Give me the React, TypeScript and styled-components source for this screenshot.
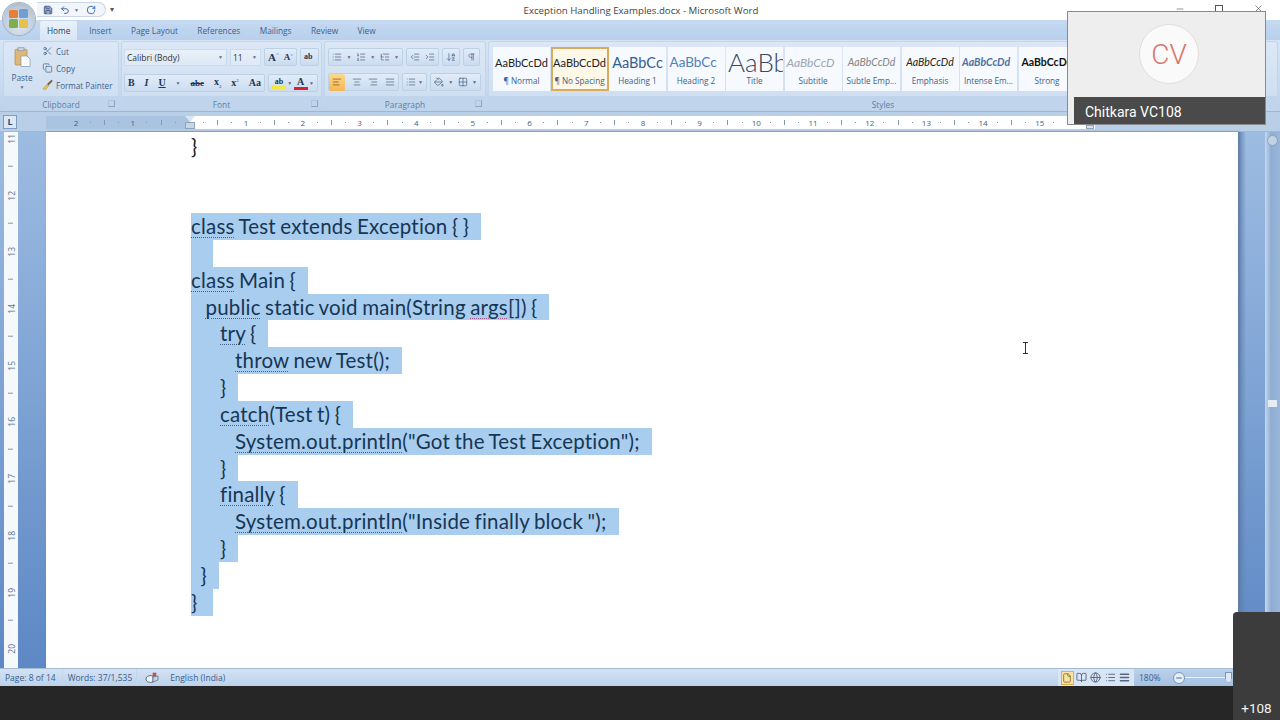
import React from "react";
import styled, { createGlobalStyle } from "styled-components";
import {
  AlignCenter, AlignJustify, AlignLeft, AlignRight, ArrowDownAZ, BookOpen, Copy, File, Globe, Grid2x2, IndentDecrease,
  IndentIncrease, List, ListOrdered, ListTree, Minus, PaintBucket, Pilcrow, Save, Scissors, Undo2, RotateCw, X,
} from "lucide-react";

const GlobalStyle = createGlobalStyle`
  html, body { margin: 0; padding: 0; background: #fff; overflow: hidden; }
  * { box-sizing: border-box; }
`;

const tabs = ["Home", "Insert", "Page Layout", "References", "Mailings", "Review", "View"];

const styleItems = [
  { name: "¶ Normal", preview: "AaBbCcDd", size: 11, color: "#222", font: "normal" },
  { name: "¶ No Spacing", preview: "AaBbCcDd", size: 11, color: "#222", font: "normal", active: true },
  { name: "Heading 1", preview: "AaBbCc", size: 14.5, color: "#365f91", font: "normal" },
  { name: "Heading 2", preview: "AaBbCc", size: 13.5, color: "#4f81bd", font: "normal", clip: true },
  { name: "Title", preview: "AaBb", size: 26, color: "#3a4a5c", font: "normal", clip: true, light: true },
  { name: "Subtitle", preview: "AaBbCcD", size: 12, color: "#9aa6b3", font: "italic", clip: true },
  { name: "Subtle Emp...", preview: "AaBbCcDd", size: 10.5, color: "#858585", font: "italic" },
  { name: "Emphasis", preview: "AaBbCcDd", size: 10.5, color: "#222", font: "italic" },
  { name: "Intense Em...", preview: "AaBbCcDd", size: 10.5, color: "#4f6fa5", font: "italic", bold: true, clip: true },
  { name: "Strong", preview: "AaBbCcDd", size: 10.5, color: "#111", font: "normal", bold: true },
];

const hRuler = ["2", "1", "", "1", "2", "3", "4", "5", "6", "7", "8", "9", "10", "11", "12", "13", "14", "15"];
const vRuler = ["11", "12", "13", "14", "15", "16", "17", "18", "19", "20"];

const Page = styled.div`
  position: relative;
  width: 1280px;
  height: 720px;
  display: flex;
  flex-direction: column;
  overflow: hidden;
  font-family: "Open Sans", "Liberation Sans", sans-serif;
  background: #262626;
`;

const TitleBar = styled.div`
  height: 20px;
  flex: none;
  display: flex;
  align-items: center;
  justify-content: center;
  background: #fff;
  color: #444;
  font-size: 9.7px;
  padding-left: 2px;
`;

const WindowButtons = styled.div`
  position: absolute;
  top: 3px;
  right: 16px;
  display: flex;
  gap: 30px;
  align-items: center;
  color: #555;
`;

const RestoreBox = styled.span`
  width: 8px;
  height: 8px;
  border: 1px solid #555;
`;

const Quick = styled.div`
  position: absolute;
  left: 37px;
  top: 2px;
  width: 69px;
  height: 15px;
  display: flex;
  align-items: center;
  gap: 7px;
  padding-left: 6px;
  background: #f2f6fb;
  border: 1px solid #c9d6e6;
  border-left: none;
  border-radius: 0 9px 9px 0;
`;

const QuickCaret = styled.span`
  margin-left: -3px;
  color: #5a6f8a;
  font-size: 5px;
`;

const QuickMore = styled.span`
  position: absolute;
  left: 110px;
  top: 4px;
  color: #555;
  font-size: 8px;
  line-height: 10px;
`;

const OfficeButton = styled.div`
  position: absolute;
  left: 3px;
  top: 3px;
  width: 32px;
  height: 32px;
  border-radius: 50%;
  display: flex;
  align-items: center;
  justify-content: center;
  background: radial-gradient(circle at 50% 70%, #dfe9f3, #b9c6d4 70%, #8ea0b2);
  box-shadow: 0 0 0 1px #9fb3c8;
`;

const TabRow = styled.div`
  height: 20px;
  flex: none;
  display: flex;
  align-items: flex-end;
  padding-left: 40px;
  background: linear-gradient(#c5daf2, #b7d0ec);
`;

const Tab = styled.div<{ $active?: boolean }>`
  height: ${(p) => (p.$active ? "19px" : "20px")};
  display: flex;
  align-items: center;
  padding: 0 ${(p) => (p.$active ? "7px" : "9.7px")};
  margin-right: ${(p) => (p.$active ? "2px" : "0")};
  font-size: 8.3px;
  color: ${(p) => (p.$active ? "#24426b" : "#3f5f8a")};
  background: ${(p) => (p.$active ? "linear-gradient(#eaf2fb, #d7e5f5)" : "transparent")};
  border-radius: 2px 2px 0 0;
`;

const Ribbon = styled.div`
  height: 72px;
  flex: none;
  display: flex;
  gap: 2px;
  padding: 1px 0 1px 3px;
  background: linear-gradient(#d6e5f6, #bdd3eb);
  border-bottom: 1px solid #9db8d6;
`;

const Group = styled.div<{ $width: number }>`
  width: ${(p) => p.$width}px;
  flex: none;
  display: flex;
  flex-direction: column;
  background: linear-gradient(#dbe7f6, #cfdff1 80%, #c0d5ec 80%);
  border: 1px solid #c2d5ea;
  border-radius: 3px;
`;

const GroupBody = styled.div`
  flex: 1;
  display: flex;
  min-height: 0;
`;

const GroupLabel = styled.div`
  position: relative;
  height: 10px;
  flex: none;
  display: flex;
  align-items: center;
  justify-content: center;
  font-size: 8.3px;
  color: #5d7ea8;
`;

const Launcher = styled.span`
  position: absolute;
  right: 3px;
  top: 1px;
  width: 7px;
  height: 7px;
  border: 1px solid #8ba5c4;
  border-top-color: #b0c4da;
  border-left-color: #b0c4da;
`;

const PasteButton = styled.div`
  width: 36px;
  display: flex;
  flex-direction: column;
  align-items: center;
  padding-top: 5px;
  font-size: 8.3px;
  line-height: 10px;
  color: #3f5f8a;
  gap: 5px;
`;

const PasteCaret = styled.span`
  margin-top: -4px;
  color: #5a6f8a;
  font-size: 5px;
  line-height: 6px;
`;

const ClipList = styled.div`
  display: flex;
  flex-direction: column;
  gap: 3px;
  padding: 2px 0 0 2px;
`;

const ClipItem = styled.div`
  display: flex;
  align-items: center;
  gap: 3px;
  height: 14px;
  font-size: 8.1px;
  color: #3f5f8a;
  white-space: nowrap;
  svg { width: 11px; flex: none; }
`;

const FontBody = styled.div`
  flex: 1;
  display: flex;
  flex-direction: column;
  gap: 8px;
  padding: 6px 2px 0 2px;
`;

const ToolRow = styled.div`
  display: flex;
  align-items: center;
  gap: 3px;
  height: 18px;
`;

const Combo = styled.div<{ $width: number }>`
  width: ${(p) => p.$width}px;
  height: 17px;
  display: flex;
  align-items: center;
  justify-content: space-between;
  padding: 0 3px 0 2px;
  font-size: 8.5px;
  color: #333;
  background: linear-gradient(#e9f0f9, #dce8f5);
  border: 1px solid #cbdbed;
`;

const Caret = styled.span`
  color: #5a6f8a;
  font-size: 5px;
`;

const ToolGroup = styled.div<{ $width: number }>`
  width: ${(p) => p.$width}px;
  height: 18px;
  flex: none;
  display: flex;
  align-items: center;
  justify-content: space-between;
  padding: 0 3px;
  background: linear-gradient(#e2ecf8, #cbdcf0);
  border: 1px solid #bcd0e6;
  border-radius: 2px;
`;

const ActiveTool = styled.span`
  width: 16px;
  height: 17px;
  margin-left: -3px;
  display: flex;
  align-items: center;
  justify-content: center;
  background: linear-gradient(#fbd98d, #f5b654);
  border-radius: 2px;
`;

const Glyph = styled.span<{ $bold?: boolean; $italic?: boolean; $under?: boolean; $strike?: boolean; $size?: number }>`
  font-family: "Liberation Serif", serif;
  font-size: ${(p) => p.$size ?? 10}px;
  line-height: 1;
  color: #24364f;
  font-weight: ${(p) => (p.$bold ? 700 : 400)};
  font-style: ${(p) => (p.$italic ? "italic" : "normal")};
  text-decoration: ${(p) => (p.$under ? "underline" : p.$strike ? "line-through" : "none")};
  white-space: nowrap;
  sup, sub { font-size: 5px; color: #5a7fb0; }
`;

const ColorGlyph = styled.span<{ $color: string }>`
  display: flex;
  flex-direction: column;
  align-items: center;
  width: 14px;
  font-family: "Liberation Serif", serif;
  font-size: 10px;
  line-height: 10px;
  font-weight: 700;
  color: #24364f;
  &::after {
    content: "";
    width: 14px;
    height: 3px;
    background: ${(p) => p.$color};
  }
`;

const ParaBody = styled.div`
  flex: 1;
  display: flex;
  flex-direction: column;
  gap: 7px;
  padding: 6px 2px 0 3px;
`;

const Gallery = styled.div`
  flex: 1;
  display: flex;
  gap: 1.5px;
  padding: 5px 0 0 4px;
  overflow: hidden;
`;

const StyleCard = styled.div<{ $active?: boolean }>`
  width: ${(p) => (p.$active ? "58px" : "57px")};
  height: 44px;
  flex: none;
  display: flex;
  flex-direction: column;
  align-items: center;
  background: ${(p) => (p.$active ? "#fdf8e8" : "#f6f9fd")};
  box-shadow: ${(p) => (p.$active ? "inset 0 0 0 2px #d9ab5c" : "none")};
  margin: ${(p) => (p.$active ? "0 -1px" : "0")};
  overflow: hidden;
`;

const Preview = styled.div<{ $size: number; $color: string; $italic: boolean; $bold?: boolean; $light?: boolean; $clip?: boolean }>`
  height: 30px;
  flex: none;
  display: flex;
  align-items: center;
  align-self: ${(p) => (p.$clip ? "flex-start" : "center")};
  padding-left: ${(p) => (p.$clip ? "2px" : "0")};
  font-family: Lato, "Noto Sans", sans-serif;
  font-size: ${(p) => p.$size}px;
  color: ${(p) => p.$color};
  font-style: ${(p) => (p.$italic ? "italic" : "normal")};
  font-weight: ${(p) => (p.$bold ? 700 : p.$light ? 300 : 400)};
  white-space: nowrap;
`;

const StyleName = styled.div`
  margin-top: -2px;
  font-size: 8.2px;
  line-height: 12px;
  color: #3f5f8a;
  white-space: nowrap;
`;

const RulerRow = styled.div`
  height: 20px;
  flex: none;
  display: flex;
  align-items: center;
  padding-top: 2px;
  background: #b9cfe8;
  border-bottom: 1px solid #9fb8d4;
`;

const RulerCorner = styled.div`
  width: 46px;
  height: 18px;
  flex: none;
  padding: 1px 0 0 3px;
`;

const CornerBox = styled.div`
  width: 14px;
  height: 14px;
  display: flex;
  align-items: center;
  justify-content: center;
  background: #dce8f5;
  border: 1px solid #7f9cc0;
  color: #2a4a72;
  font-size: 9px;
  font-weight: 700;
  line-height: 10px;
`;

const Ruler = styled.div`
  position: relative;
  width: 1049px;
  height: 13px;
  display: flex;
  padding-left: 23px;
  background: linear-gradient(90deg, #a9c3e0 144px, #fff 144px);
  overflow: hidden;
`;

const RulerCell = styled.div`
  width: 56.7px;
  flex: none;
  display: grid;
  grid-template-columns: repeat(4, 1fr);
  align-items: center;
  justify-items: center;
  font-size: 8px;
  color: #46617f;
`;

const Tick = styled.span<{ $long?: boolean }>`
  width: 1px;
  height: ${(p) => (p.$long ? "5px" : "1px")};
  background: #8397ae;
`;

const Indent = styled.div`
  position: absolute;
  left: 139px;
  top: 0;
  width: 0;
  height: 0;
  border-left: 5px solid transparent;
  border-right: 5px solid transparent;
  border-top: 6px solid #dbe5f0;
`;

const IndentFoot = styled.div`
  position: absolute;
  left: 139px;
  top: 6px;
  width: 10px;
  height: 7px;
  background: #c7d5e4;
  border: 1px solid #8fa5be;
`;

const RightIndent = styled.div`
  position: absolute;
  right: 1px;
  bottom: 0;
  width: 8px;
  height: 4px;
  background: #dbe5f0;
  border: 1px solid #8fa5be;
`;

const Main = styled.div`
  height: 536px;
  flex: none;
  display: flex;
  background: linear-gradient(#9dbce2, #5d88c5);
`;

const VRulerTrack = styled.div`
  width: 14px;
  margin-left: 4px;
  flex: none;
  display: flex;
  flex-direction: column;
  align-items: center;
  background: #f6f9fc;
  font-size: 8.5px;
  color: #5b7390;
  overflow: hidden;
`;

const VRulerCell = styled.div`
  position: relative;
  width: 14px;
  height: 56.7px;
  flex: none;
  display: flex;
  align-items: center;
  justify-content: center;
  writing-mode: vertical-rl;
  transform: translateY(-22px) rotate(180deg);
  &::after {
    content: "";
    position: absolute;
    top: 0;
    left: 5px;
    width: 5px;
    height: 1px;
    background: #8397ae;
  }
`;

const Gutter = styled.div`
  width: 28px;
  flex: none;
`;

const DocPage = styled.div`
  width: 1192px;
  flex: none;
  padding: 0 0 0 145px;
  background: #fff;
  box-shadow: 1px 0 2px #5f7088;
  font-family: Lato, sans-serif;
  font-size: 20.5px;
  letter-spacing: 0.2px;
  word-spacing: -1px;
  font-variant-ligatures: none;
  color: #173653;
`;

const Brace = styled.div`
  height: 28px;
  line-height: 28px;
  color: #222;
  margin-bottom: 53px;
`;

const SelLine = styled.div<{ $indent?: number }>`
  width: fit-content;
  height: 26.85px;
  line-height: 27px;
  padding-left: ${(p) => p.$indent ?? 0}px;
  padding-right: 12px;
  min-width: 22px;
  white-space: pre;
  background: #a8cdef;
`;

const Spell = styled.span<{ $grammar?: boolean }>`
  text-decoration: underline dotted ${(p) => (p.$grammar ? "#9a5a8c" : "#43618c")} 1px;
  text-underline-offset: 3px;
`;

const SideBlue = styled.div`
  width: 27px;
  flex: none;
  background: linear-gradient(90deg, #5f7ea8, transparent 30%);
`;

const ScrollBar = styled.div`
  position: relative;
  flex: 1;
  background: linear-gradient(90deg, #c6d8ee, #8fadd2 40%, #9ab7da);
`;

const ScrollUp = styled.div`
  position: absolute;
  top: 3px;
  left: 2px;
  width: 11px;
  height: 11px;
  border-radius: 50%;
  background: #c2d3e6;
  border: 1px solid #8aa0b8;
`;

const ScrollMark = styled.div`
  position: absolute;
  top: 268px;
  left: 3px;
  width: 9px;
  height: 7px;
  background: #e4ecf4;
`;

const StatusBar = styled.div`
  height: 18px;
  flex: none;
  display: flex;
  align-items: center;
  justify-content: space-between;
  background: linear-gradient(#d3e2f4, #bbd2ec);
  border-top: 1px solid #a5bbd4;
  font-size: 8.5px;
  color: #3c5c88;
`;

const StatusLeft = styled.div`
  display: flex;
  align-items: center;
  height: 100%;
`;

const StatusCell = styled.div<{ $pad?: number }>`
  display: flex;
  align-items: center;
  height: 100%;
  padding: 0 ${(p) => p.$pad ?? 6}px 0 5px;
  border-right: 1px solid #c4d6ea;
`;

const StatusPlain = styled.div<{ $left: number }>`
  display: flex;
  padding-left: ${(p) => p.$left}px;
  white-space: nowrap;
`;

const StatusRight = styled.div`
  width: 222px;
  height: 100%;
  display: flex;
  align-items: center;
  padding-right: 48px;
  background: linear-gradient(#bcd1ea, #a5c0e0);
`;

const ViewButtons = styled.div`
  width: 76px;
  height: 100%;
  flex: none;
  display: flex;
  align-items: center;
  justify-content: space-around;
  padding: 0 2px;
  background: #d8e5f4;
  color: #55677e;
`;

const ViewIcon = styled.span<{ $active?: boolean }>`
  width: 13px;
  height: 14px;
  display: flex;
  align-items: center;
  justify-content: center;
  background: ${(p) => (p.$active ? "#f9e2a6" : "transparent")};
  border: 1px solid ${(p) => (p.$active ? "#e0ae4a" : "transparent")};
`;

const ZoomLabel = styled.div`
  padding: 0 12px 0 5px;
  color: #35609b;
`;

const ZoomMinus = styled.div`
  width: 12px;
  height: 12px;
  flex: none;
  display: flex;
  align-items: center;
  justify-content: center;
  border-radius: 50%;
  background: #e6eef8;
  border: 1px solid #7a95b8;
  color: #35506f;
`;

const ZoomTrack = styled.div`
  flex: 1;
  height: 1px;
  background: #eaf1f9;
`;

const ZoomThumb = styled.div`
  width: 7px;
  height: 11px;
  flex: none;
  background: #dfe8f3;
  border: 1px solid #7a95b8;
  clip-path: polygon(0 0, 100% 0, 100% 60%, 50% 100%, 0 60%);
`;

const BottomBar = styled.div`
  flex: 1;
  background: #262626;
`;

const VideoTile = styled.div`
  position: absolute;
  left: 1067px;
  top: 11px;
  width: 199px;
  height: 114px;
  display: flex;
  flex-direction: column;
  align-items: center;
  justify-content: flex-end;
  padding: 0 0 0 6px;
  background: #eeeeee;
  border: 1px solid #8a8a8a;
`;

const Avatar = styled.div`
  position: absolute;
  left: 71px;
  top: 12px;
  width: 60px;
  height: 60px;
  display: flex;
  align-items: center;
  justify-content: center;
  border-radius: 50%;
  background: #fafafa;
  border: 1px solid #e6dcdc;
  color: #d8756d;
  font-family: Roboto, sans-serif;
  font-size: 28px;
  font-weight: 300;
`;

const NameTag = styled.div`
  width: 100%;
  height: 27px;
  display: flex;
  align-items: center;
  padding: 2px 0 0 11px;
  background: #4a4a4a;
  color: #fff;
  font-family: Roboto, sans-serif;
  font-size: 14px;
`;

const MoreBox = styled.div`
  position: absolute;
  right: 0;
  bottom: 0;
  width: 47px;
  height: 108px;
  display: flex;
  align-items: flex-end;
  justify-content: center;
  padding-bottom: 4px;
  background: #3c3c3c;
  border-radius: 4px 0 0 0;
  color: #f2f2f2;
  font-family: Roboto, sans-serif;
  font-size: 13.5px;
`;

const IBeam = styled.div`
  position: absolute;
  left: 1025px;
  top: 342px;
  width: 1px;
  height: 12px;
  background: #333;
  &::before, &::after {
    content: "";
    position: absolute;
    left: -2px;
    width: 5px;
    height: 1px;
    background: #333;
  }
  &::before { top: 0; }
  &::after { bottom: 0; }
`;

const icon = { size: 10, strokeWidth: 1.6, color: "#3e5a7e" };

const OfficeLogo = () => (
  <svg width="24" height="24" viewBox="0 0 24 24">
    <rect x="2" y="3" width="9" height="8" rx="1.5" fill="#e2803a" />
    <rect x="12" y="2" width="9" height="9" rx="1.5" fill="#6f9fd0" />
    <rect x="2" y="12" width="9" height="9" rx="1.5" fill="#7fae4e" />
    <rect x="12" y="12" width="9" height="9" rx="1.5" fill="#e6c24c" />
  </svg>
);

const PasteIcon = () => (
  <svg width="19" height="21" viewBox="0 0 22 28">
    <rect x="1" y="3" width="16" height="21" rx="1.5" fill="#dcb777" stroke="#b08d52" />
    <rect x="5" y="1" width="8" height="4" fill="#cfd6de" stroke="#8b96a3" />
    <path d="M9 12h8l4 4v10H9z" fill="#fff" stroke="#8b9cb0" />
  </svg>
);

const BrushIcon = () => (
  <svg width="12" height="12" viewBox="0 0 12 12">
    <path d="M11 1 6 6" stroke="#7a5a30" strokeWidth="2" />
    <path d="M6 5 1 10l3 1 3-4z" fill="#f0c64e" stroke="#a9862f" strokeWidth=".6" />
  </svg>
);

const SpellIcon = () => (
  <svg width="16" height="14" viewBox="0 0 16 14">
    <path d="M2 8c0-3 4-4 7-3v6c-3 1-7 0-7-3z" fill="#eef3f9" stroke="#55677e" />
    <path d="M9 2l3 3m0-3L9 5" stroke="#d8492f" strokeWidth="2" />
    <path d="M9 6l5-1v4l-5 2z" fill="#c9d3df" stroke="#55677e" strokeWidth=".7" />
  </svg>
);

const HighlightIcon = () => (
  <ColorGlyph $color="#f5e642">
    <Glyph $size={8} $bold>ab</Glyph>
  </ColorGlyph>
);

export default function App() {
  return (
    <Page>
      <GlobalStyle />
      <TitleBar>Exception Handling Examples.docx - Microsoft Word</TitleBar>

      <TabRow>
        {tabs.map((t, i) => (
          <Tab key={t} $active={i === 0}>{t}</Tab>
        ))}
      </TabRow>

      <Ribbon>
        <Group $width={116}>
          <GroupBody>
            <PasteButton>
              <PasteIcon />
              Paste
              <PasteCaret>▼</PasteCaret>
            </PasteButton>
            <ClipList>
              <ClipItem><Scissors {...icon} />Cut</ClipItem>
              <ClipItem><Copy {...icon} />Copy</ClipItem>
              <ClipItem><BrushIcon />Format Painter</ClipItem>
            </ClipList>
          </GroupBody>
          <GroupLabel>Clipboard<Launcher /></GroupLabel>
        </Group>

        <Group $width={201}>
          <FontBody>
            <ToolRow>
              <Combo $width={103}>Calibri (Body)<Caret>▼</Caret></Combo>
              <Combo $width={31}>11<Caret>▼</Caret></Combo>
              <ToolGroup $width={33}>
                <Glyph $bold $size={11}>A<sup>^</sup></Glyph>
                <Glyph $bold $size={9}>A<sup>˅</sup></Glyph>
              </ToolGroup>
              <ToolGroup $width={19}><Glyph $size={8} $bold>ab</Glyph></ToolGroup>
            </ToolRow>
            <ToolRow>
              <ToolGroup $width={141}>
                <Glyph $bold>B</Glyph>
                <Glyph $italic $bold>I</Glyph>
                <Glyph $bold $under>U</Glyph>
                <Caret>▼</Caret>
                <Glyph $strike $bold $size={9}>abe</Glyph>
                <Glyph $bold>x<sub>2</sub></Glyph>
                <Glyph $bold>x<sup>2</sup></Glyph>
                <Glyph $bold>Aa</Glyph>
              </ToolGroup>
              <ToolGroup $width={50}>
                <HighlightIcon />
                <Caret>▼</Caret>
                <ColorGlyph $color="#d8232a">A</ColorGlyph>
                <Caret>▼</Caret>
              </ToolGroup>
            </ToolRow>
          </FontBody>
          <GroupLabel>Font<Launcher /></GroupLabel>
        </Group>

        <Group $width={162}>
          <ParaBody>
            <ToolRow>
              <ToolGroup $width={75}>
                <List {...icon} /><Caret>▼</Caret>
                <ListOrdered {...icon} /><Caret>▼</Caret>
                <ListTree {...icon} /><Caret>▼</Caret>
              </ToolGroup>
              <ToolGroup $width={33}>
                <IndentDecrease {...icon} />
                <IndentIncrease {...icon} />
              </ToolGroup>
              <ToolGroup $width={18}><ArrowDownAZ {...icon} /></ToolGroup>
              <ToolGroup $width={17}><Pilcrow {...icon} /></ToolGroup>
            </ToolRow>
            <ToolRow>
              <ToolGroup $width={71}>
                <ActiveTool><AlignLeft {...icon} color="#7a4a10" /></ActiveTool>
                <AlignCenter {...icon} />
                <AlignRight {...icon} />
                <AlignJustify {...icon} />
              </ToolGroup>
              <ToolGroup $width={25}><List {...icon} /><Caret>▼</Caret></ToolGroup>
              <ToolGroup $width={51}>
                <PaintBucket {...icon} /><Caret>▼</Caret>
                <Grid2x2 {...icon} /><Caret>▼</Caret>
              </ToolGroup>
            </ToolRow>
          </ParaBody>
          <GroupLabel>Paragraph<Launcher /></GroupLabel>
        </Group>

        <Group $width={790}>
          <Gallery>
            {styleItems.map((s) => (
              <StyleCard key={s.name} $active={s.active}>
                <Preview
                  $size={s.size}
                  $color={s.color}
                  $italic={s.font === "italic"}
                  $bold={s.bold}
                  $light={s.light}
                  $clip={s.clip}
                >
                  {s.preview}
                </Preview>
                <StyleName>{s.name}</StyleName>
              </StyleCard>
            ))}
          </Gallery>
          <GroupLabel>Styles</GroupLabel>
        </Group>
      </Ribbon>

      <RulerRow>
        <RulerCorner><CornerBox>L</CornerBox></RulerCorner>
        <Ruler>
          {hRuler.map((n, i) => (
            <RulerCell key={i}>
              <span>{n}</span>
              <Tick />
              <Tick $long />
              <Tick />
            </RulerCell>
          ))}
          <Indent />
          <IndentFoot />
          <RightIndent />
        </Ruler>
      </RulerRow>

      <Main>
        <VRulerTrack>
          {vRuler.map((n) => (
            <VRulerCell key={n}>{n}</VRulerCell>
          ))}
        </VRulerTrack>
        <Gutter />
        <DocPage>
          <Brace>{"}"}</Brace>
          <SelLine><Spell>class</Spell> Test extends Exception {"{ }"}</SelLine>
          <SelLine />
          <SelLine><Spell>class</Spell> Main {"{"}</SelLine>
          <SelLine $indent={14.5}><Spell>public</Spell> static void main(String <Spell $grammar>args</Spell>[]) {"{"}</SelLine>
          <SelLine $indent={29}><Spell>try</Spell> {"{"}</SelLine>
          <SelLine $indent={44}><Spell>throw</Spell> new Test();</SelLine>
          <SelLine $indent={29}>{"}"}</SelLine>
          <SelLine $indent={29}><Spell>catch</Spell>(Test t) {"{"}</SelLine>
          <SelLine $indent={44}><Spell>System.out.println</Spell>("Got the Test Exception");</SelLine>
          <SelLine $indent={29}>{"}"}</SelLine>
          <SelLine $indent={29}><Spell>finally</Spell> {"{"}</SelLine>
          <SelLine $indent={44}><Spell>System.out.println</Spell>("Inside finally block ");</SelLine>
          <SelLine $indent={29}>{"}"}</SelLine>
          <SelLine $indent={9.5}>{"}"}</SelLine>
          <SelLine>{"}"}</SelLine>
        </DocPage>
        <SideBlue />
        <ScrollBar>
          <ScrollUp />
          <ScrollMark />
        </ScrollBar>
      </Main>

      <StatusBar>
        <StatusLeft>
          <StatusCell>Page: 8 of 14</StatusCell>
          <StatusCell $pad={4}>Words: 37/1,535</StatusCell>
          <StatusPlain $left={7}><SpellIcon /></StatusPlain>
          <StatusPlain $left={10}>English (India)</StatusPlain>
        </StatusLeft>
        <StatusRight>
          <ViewButtons>
            <ViewIcon $active><File size={10} color="#8a6a2a" /></ViewIcon>
            <ViewIcon><BookOpen size={11} /></ViewIcon>
            <ViewIcon><Globe size={11} /></ViewIcon>
            <ViewIcon><List size={11} /></ViewIcon>
            <ViewIcon><AlignJustify size={11} strokeWidth={3} /></ViewIcon>
          </ViewButtons>
          <ZoomLabel>180%</ZoomLabel>
          <ZoomMinus><Minus size={8} strokeWidth={2.5} /></ZoomMinus>
          <ZoomTrack />
          <ZoomThumb />
        </StatusRight>
      </StatusBar>

      <BottomBar />

      <OfficeButton><OfficeLogo /></OfficeButton>
      <Quick>
        <Save size={10} strokeWidth={2} color="#3f4f80" fill="#9aa9cc" />
        <Undo2 size={10} strokeWidth={2.4} color="#3f6fa8" />
        <QuickCaret>▼</QuickCaret>
        <RotateCw size={10} strokeWidth={2.4} color="#3f6fa8" />
      </Quick>
      <QuickMore>▾</QuickMore>
      <WindowButtons>
        <Minus size={10} strokeWidth={1.5} />
        <RestoreBox />
        <X size={11} strokeWidth={1.5} />
      </WindowButtons>
      <IBeam />
      <VideoTile>
        <Avatar>CV</Avatar>
        <NameTag>Chitkara VC108</NameTag>
      </VideoTile>
      <MoreBox>+108</MoreBox>
    </Page>
  );
}
